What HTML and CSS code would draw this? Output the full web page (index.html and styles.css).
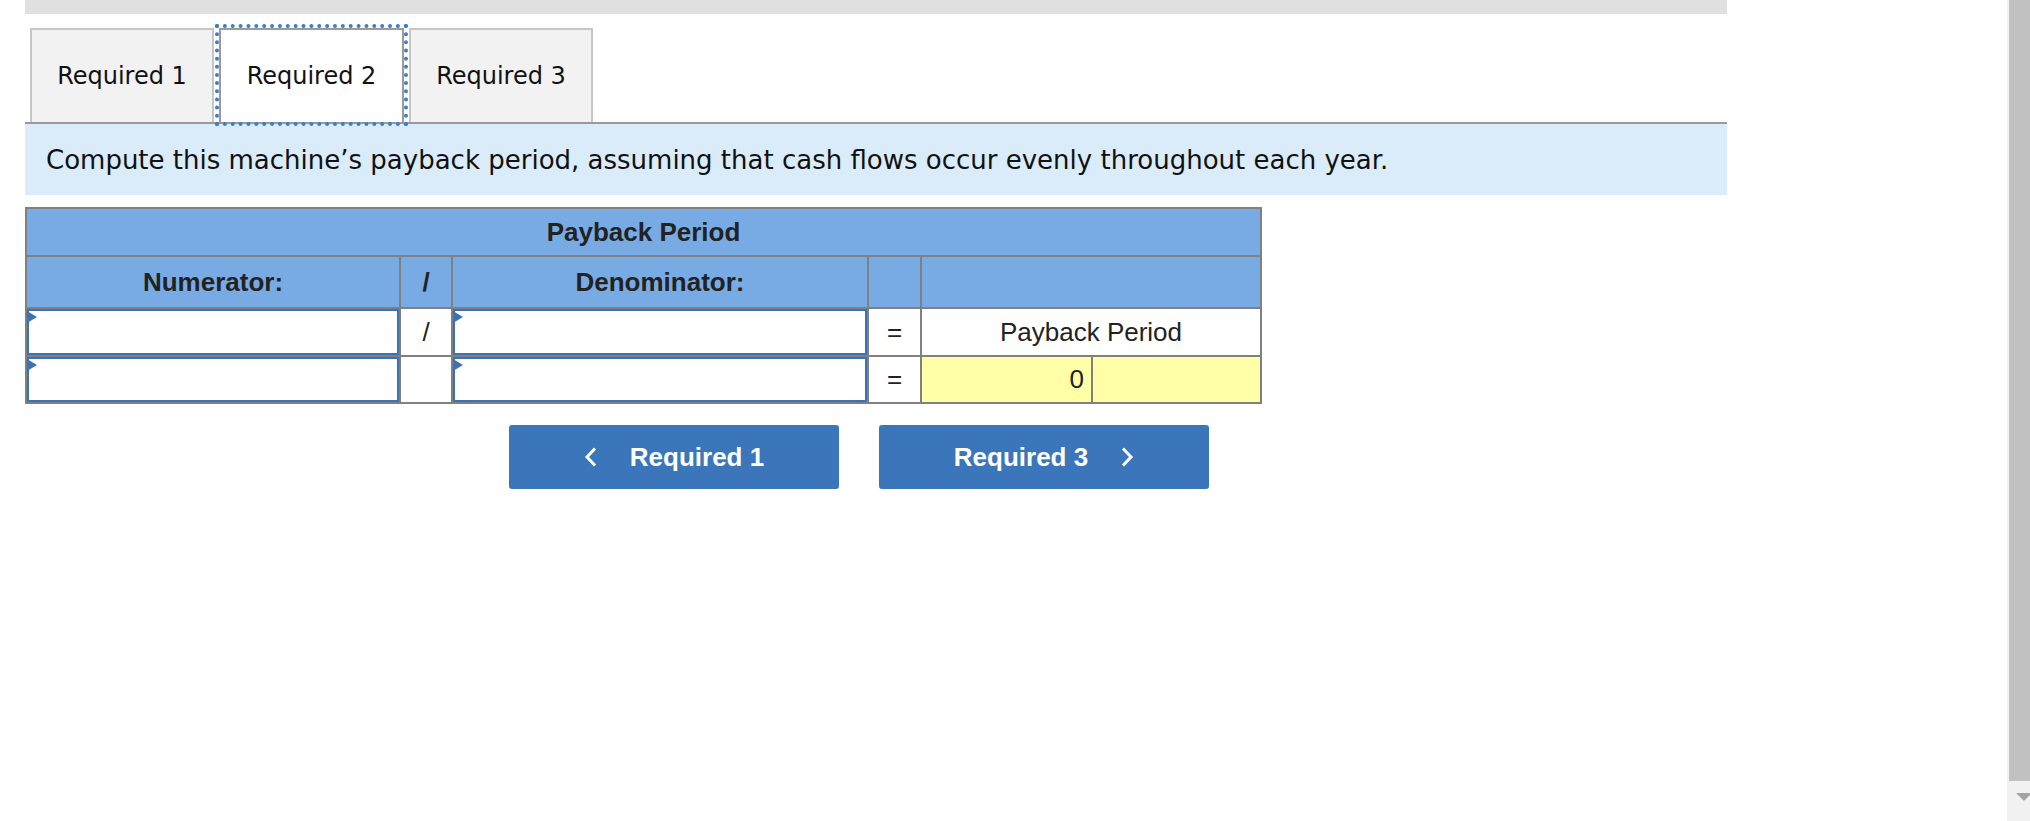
FILE: index.html
```html
<!DOCTYPE html>
<html lang="en">
<head>
<meta charset="utf-8">
<title>Payback Period</title>
<link rel="stylesheet" href="styles.css">
</head>
<body>
<div class="window">
  <main class="page">
    <div class="topbar"></div>
    <nav class="tabs">
      <div class="tab">Required 1</div>
      <div class="tab active">Required 2</div>
      <div class="tab">Required 3</div>
    </nav>
    <div class="prompt">Compute this machine’s payback period, assuming that cash flows occur evenly throughout each year.</div>
    <div class="grid">
      <div class="cell head span-all">Payback Period</div>
      <div class="cell head">Numerator:</div>
      <div class="cell head">/</div>
      <div class="cell head">Denominator:</div>
      <div class="cell head"></div>
      <div class="cell head span2"></div>

      <div class="cell field"><input type="text" aria-label="Numerator 1"><span class="flag"></span></div>
      <div class="cell">/</div>
      <div class="cell field"><input type="text" aria-label="Denominator 1"><span class="flag"></span></div>
      <div class="cell">=</div>
      <div class="cell span2">Payback Period</div>

      <div class="cell field"><input type="text" aria-label="Numerator 2"><span class="flag"></span></div>
      <div class="cell"></div>
      <div class="cell field"><input type="text" aria-label="Denominator 2"><span class="flag"></span></div>
      <div class="cell">=</div>
      <div class="cell result">0</div>
      <div class="cell result"></div>
    </div>
    <div class="nav-buttons">
      <button class="btn">
        <svg class="chev" width="14" height="20" viewBox="0 0 14 20"><polyline points="11,1.5 3,10 11,18.5" fill="none" stroke="#fff" stroke-width="3"/></svg>
        <span>Required 1</span>
      </button>
      <button class="btn">
        <span>Required 3</span>
        <svg class="chev" width="14" height="20" viewBox="0 0 14 20"><polyline points="3,1.5 11,10 3,18.5" fill="none" stroke="#fff" stroke-width="3"/></svg>
      </button>
    </div>
  </main>
  <div class="scrollbar">
    <div class="thumb"></div>
    <div class="arrow"></div>
  </div>
</div>
</body>
</html>
```

FILE: styles.css
```css
html, body {
  margin: 0;
  padding: 0;
  background: #fff;
}

.window {
  display: flex;
  height: 821px;
  overflow: hidden;
}

.page {
  width: 1702px;
  margin-left: 25px;
}

.topbar {
  height: 14px;
  background: #e0e0e0;
}

.tabs {
  display: flex;
  gap: 5px;
  height: 94px;
  padding: 14px 0 0 5px;
  border-bottom: 2px solid #9a9a9a;
}

.tab {
  width: 184px;
  box-sizing: border-box;
  border: 2px solid #c6c6c6;
  border-bottom: 0;
  background: #f2f2f2;
  display: flex;
  align-items: center;
  justify-content: center;
  font-family: "DejaVu Sans", Verdana, sans-serif;
  font-size: 24px;
  color: #111;
}

.tab.active {
  width: 185px;
  background: #fff;
  border-color: #9a9a9a;
  outline: 4px dotted #3f7dca;
}

.prompt {
  height: 71px;
  background: #daebf9;
  display: flex;
  align-items: center;
  padding-left: 21px;
  font-family: "DejaVu Sans", Verdana, sans-serif;
  font-size: 26px;
  color: #111;
}

.grid {
  margin-top: 12px;
  display: grid;
  grid-template-columns: 372px 50px 414px 51px 169px 167px;
  grid-template-rows: 46px 50px 46px 45px;
  gap: 2px;
  padding: 2px;
  background: #808080;
  width: max-content;
}

.cell {
  background: #fff;
  display: flex;
  align-items: center;
  justify-content: center;
  font-family: "Liberation Sans", Arial, sans-serif;
  font-size: 26px;
  color: #222;
}

.head {
  background: #78abe4;
  font-weight: bold;
}

.span-all {
  grid-column: 1 / -1;
}

.span2 {
  grid-column: span 2;
}

.field {
  position: relative;
}

.field input {
  width: 100%;
  height: 100%;
  box-sizing: border-box;
  margin: 0;
  padding: 0 8px;
  border: 2px solid #3a72b8;
  background: #fff;
  font: 26px "Liberation Sans", Arial, sans-serif;
  outline: none;
}

.flag {
  position: absolute;
  left: 0;
  top: 2px;
  width: 0;
  height: 0;
  border-left: 10px solid #3a72b8;
  border-top: 6.5px solid transparent;
  border-bottom: 6.5px solid transparent;
}

.result {
  background: #ffffa8;
  justify-content: flex-end;
  padding-right: 7px;
}

.nav-buttons {
  display: flex;
  gap: 40px;
  margin: 21px 0 0 484px;
}

.btn {
  width: 330px;
  height: 64px;
  border: 0;
  border-radius: 3px;
  background: #3a76b9;
  color: #fff;
  font-family: "Liberation Sans", Arial, sans-serif;
  font-weight: bold;
  font-size: 26px;
  display: flex;
  align-items: center;
  justify-content: center;
  gap: 32px;
  padding: 0;
}

.chev {
  display: block;
}

.scrollbar {
  margin-left: auto;
  width: 23px;
  height: 821px;
  background: #f1f1f1;
  overflow: hidden;
}

.thumb {
  margin-left: 2px;
  height: 781px;
  background: #c1c1c1;
}

.arrow {
  margin: 12px 0 0 9px;
  width: 0;
  height: 0;
  border-left: 8px solid transparent;
  border-right: 8px solid transparent;
  border-top: 8px solid #a3a3a3;
}
```
